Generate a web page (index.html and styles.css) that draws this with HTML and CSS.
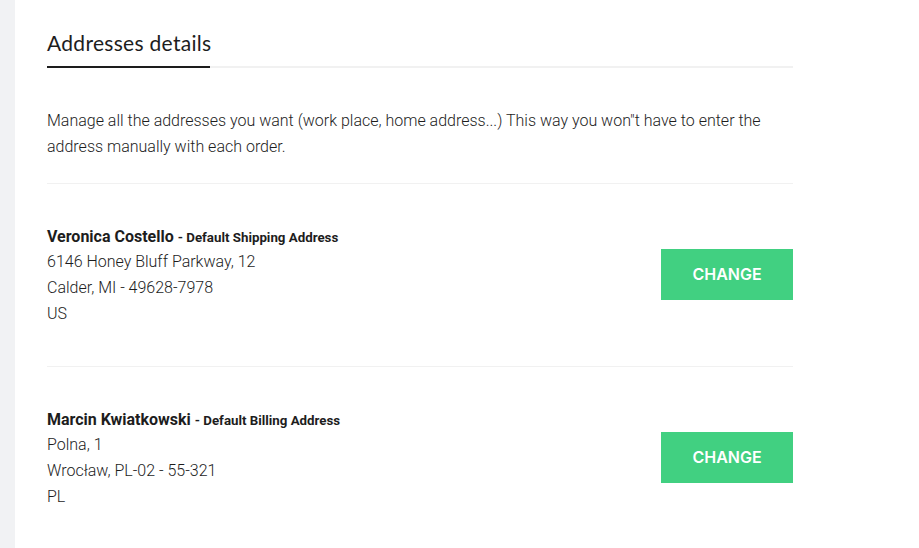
FILE: index.html
```html
<!DOCTYPE html>
<html lang="en">
<head>
<meta charset="utf-8">
<title>Addresses details</title>
<link rel="stylesheet" href="styles.css">
</head>
<body>
<div class="page">
  <aside class="strip"></aside>
  <main class="content">
    <div class="tabs">
      <h2 class="tab-title">Addresses details</h2>
    </div>
    <p class="intro">Manage all the addresses you want (work place, home address...) This way you won"t have to enter the address manually with each order.</p>
    <section class="address">
      <div class="address-info">
        <div class="address-name">Veronica Costello <span class="address-type">- Default Shipping Address</span></div>
        <div class="address-line">6146 Honey Bluff Parkway, 12</div>
        <div class="address-line">Calder, MI - 49628-7978</div>
        <div class="address-line">US</div>
      </div>
      <button class="btn-change">CHANGE</button>
    </section>
    <section class="address">
      <div class="address-info">
        <div class="address-name">Marcin Kwiatkowski <span class="address-type">- Default Billing Address</span></div>
        <div class="address-line">Polna, 1</div>
        <div class="address-line">Wrocław, PL-02 - 55-321</div>
        <div class="address-line">PL</div>
      </div>
      <button class="btn-change">CHANGE</button>
    </section>
  </main>
</div>
</body>
</html>
```

FILE: styles.css
```css
html, body {
  margin: 0;
  padding: 0;
  background: #ffffff;
}
body {
  font-family: Roboto, "Liberation Sans", sans-serif;
  color: #1d1d1d;
  height: 548px;
  overflow: hidden;
}
.page {
  display: flex;
  min-height: 548px;
}
.strip {
  width: 15px;
  flex: none;
  background: #f1f2f4;
}
.content {
  width: 746px;
  padding: 29px 0 0 32px;
}
.tabs {
  border-bottom: 2px solid #f1f1f1;
  display: flex;
}
.tab-title {
  margin: 0 0 -2px 0;
  padding: 0 0 9px 0;
  font-family: Lato, "Open Sans", sans-serif;
  font-weight: 400;
  font-size: 21px;
  line-height: 28px;
  letter-spacing: 0.3px;
  color: #1d1d1d;
  border-bottom: 2px solid #1d1d1d;
  width: 163px;
  white-space: nowrap;
}
.intro {
  margin: 40px 0 0 0;
  font-size: 16px;
  line-height: 26px;
  font-weight: 300;
  padding-bottom: 23px;
  border-bottom: 1px solid #f1f1f1;
}
.address {
  display: flex;
  align-items: center;
  justify-content: space-between;
  padding: 41px 0 39px 0;
  border-bottom: 1px solid #f1f1f1;
}
.address-name {
  font-size: 16px;
  font-weight: 700;
  line-height: 23px;
}
.address-type {
  font-size: 13.3px;
  font-weight: 700;
}
.address-line {
  font-size: 16px;
  font-weight: 300;
  line-height: 26px;
}
.btn-change {
  width: 132px;
  height: 51px;
  margin-top: -4px;
  border: none;
  background: #41d081;
  color: #ffffff;
  font-family: Inter, "Open Sans", sans-serif;
  font-weight: 600;
  font-size: 16px;
  letter-spacing: 0;
  cursor: pointer;
}
```
